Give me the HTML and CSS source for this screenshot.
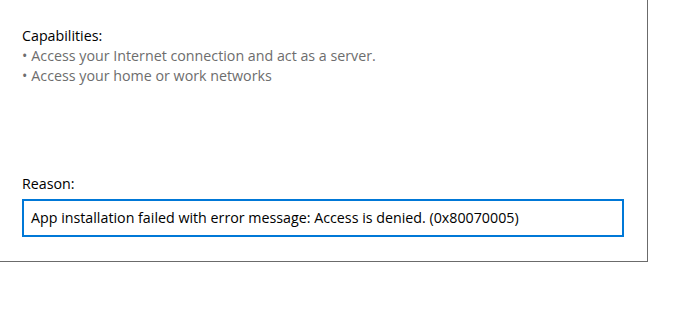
FILE: index.html
```html
<!DOCTYPE html>
<html lang="en">

<head>
    <meta charset="UTF-8">
    <title>App installer</title>
    <link rel="stylesheet" href="styles.css">
</head>

<body>
    <div class="panel">
        <div class="section">
            <p class="label">Capabilities:</p>
            <ul class="caps">
                <li>Access your Internet connection and act as a server.</li>
                <li>Access your home or work networks</li>
            </ul>
        </div>
        <div class="section reason">
            <p class="label">Reason:</p>
            <div class="error-box">App installation failed with error message: Access is denied. (0x80070005)</div>
        </div>
    </div>
</body>

</html>
```

FILE: styles.css
```css
body {
    font-family: "Open Sans", "Noto Sans", Arial, sans-serif;
    margin: 0;
    padding: 0;
    background-color: #fff;
}

.panel {
    width: 648px;
    height: 262px;
    border-right: 1px solid #6b6b6b;
    border-bottom: 1px solid #6b6b6b;
    padding: 26px 0 0 22px;
    box-sizing: border-box;
    display: flex;
    flex-direction: column;
}

.label {
    margin: 0;
    font-size: 14.25px;
    line-height: 20px;
    color: #000;
}

.caps {
    list-style: none;
    margin: 0;
    padding: 0;
    font-size: 14.25px;
    line-height: 20px;
    color: #6d6d6d;
}

.caps li::before {
    content: "\2022";
    margin-right: 4px;
}

.reason {
    margin-top: 88px;
}

.error-box {
    width: 602px;
    height: 38px;
    margin-top: 5px;
    border: 2px solid #0078d7;
    box-sizing: border-box;
    padding-left: 7px;
    font-size: 14.25px;
    line-height: 34px;
    color: #000;
}
```
